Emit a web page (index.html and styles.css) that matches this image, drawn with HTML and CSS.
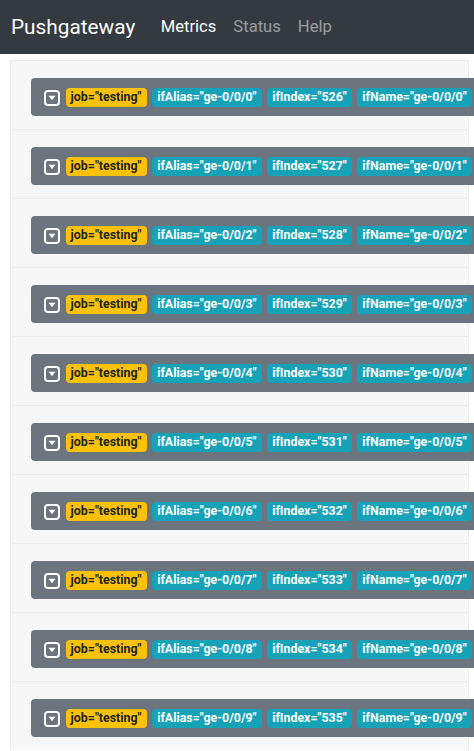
FILE: index.html
```html
<!DOCTYPE html>
<html lang="en">
<head>
<meta charset="utf-8">
<title>Pushgateway</title>
<link rel="stylesheet" href="styles.css">
</head>
<body>
<nav class="navbar">
  <a class="brand" href="#">Pushgateway</a>
  <ul class="nav">
    <li class="nav-item active">Metrics</li>
    <li class="nav-item">Status</li>
    <li class="nav-item">Help</li>
  </ul>
</nav>
<main class="groups">
  <div class="card"><div class="card-header"><div class="group-btn"><svg class="toggle" viewBox="0 0 16 16"><rect x="1" y="1" width="14" height="14" rx="3" ry="3"/><polygon points="4.5,5.8 11.5,5.8 8,10.2"/></svg><span class="badge warn">job="testing"</span><span class="badge info">ifAlias="ge-0/0/0"</span><span class="badge info">ifIndex="526"</span><span class="badge info">ifName="ge-0/0/0"</span></div></div></div>
  <div class="card"><div class="card-header"><div class="group-btn"><svg class="toggle" viewBox="0 0 16 16"><rect x="1" y="1" width="14" height="14" rx="3" ry="3"/><polygon points="4.5,5.8 11.5,5.8 8,10.2"/></svg><span class="badge warn">job="testing"</span><span class="badge info">ifAlias="ge-0/0/1"</span><span class="badge info">ifIndex="527"</span><span class="badge info">ifName="ge-0/0/1"</span></div></div></div>
  <div class="card"><div class="card-header"><div class="group-btn"><svg class="toggle" viewBox="0 0 16 16"><rect x="1" y="1" width="14" height="14" rx="3" ry="3"/><polygon points="4.5,5.8 11.5,5.8 8,10.2"/></svg><span class="badge warn">job="testing"</span><span class="badge info">ifAlias="ge-0/0/2"</span><span class="badge info">ifIndex="528"</span><span class="badge info">ifName="ge-0/0/2"</span></div></div></div>
  <div class="card"><div class="card-header"><div class="group-btn"><svg class="toggle" viewBox="0 0 16 16"><rect x="1" y="1" width="14" height="14" rx="3" ry="3"/><polygon points="4.5,5.8 11.5,5.8 8,10.2"/></svg><span class="badge warn">job="testing"</span><span class="badge info">ifAlias="ge-0/0/3"</span><span class="badge info">ifIndex="529"</span><span class="badge info">ifName="ge-0/0/3"</span></div></div></div>
  <div class="card"><div class="card-header"><div class="group-btn"><svg class="toggle" viewBox="0 0 16 16"><rect x="1" y="1" width="14" height="14" rx="3" ry="3"/><polygon points="4.5,5.8 11.5,5.8 8,10.2"/></svg><span class="badge warn">job="testing"</span><span class="badge info">ifAlias="ge-0/0/4"</span><span class="badge info">ifIndex="530"</span><span class="badge info">ifName="ge-0/0/4"</span></div></div></div>
  <div class="card"><div class="card-header"><div class="group-btn"><svg class="toggle" viewBox="0 0 16 16"><rect x="1" y="1" width="14" height="14" rx="3" ry="3"/><polygon points="4.5,5.8 11.5,5.8 8,10.2"/></svg><span class="badge warn">job="testing"</span><span class="badge info">ifAlias="ge-0/0/5"</span><span class="badge info">ifIndex="531"</span><span class="badge info">ifName="ge-0/0/5"</span></div></div></div>
  <div class="card"><div class="card-header"><div class="group-btn"><svg class="toggle" viewBox="0 0 16 16"><rect x="1" y="1" width="14" height="14" rx="3" ry="3"/><polygon points="4.5,5.8 11.5,5.8 8,10.2"/></svg><span class="badge warn">job="testing"</span><span class="badge info">ifAlias="ge-0/0/6"</span><span class="badge info">ifIndex="532"</span><span class="badge info">ifName="ge-0/0/6"</span></div></div></div>
  <div class="card"><div class="card-header"><div class="group-btn"><svg class="toggle" viewBox="0 0 16 16"><rect x="1" y="1" width="14" height="14" rx="3" ry="3"/><polygon points="4.5,5.8 11.5,5.8 8,10.2"/></svg><span class="badge warn">job="testing"</span><span class="badge info">ifAlias="ge-0/0/7"</span><span class="badge info">ifIndex="533"</span><span class="badge info">ifName="ge-0/0/7"</span></div></div></div>
  <div class="card"><div class="card-header"><div class="group-btn"><svg class="toggle" viewBox="0 0 16 16"><rect x="1" y="1" width="14" height="14" rx="3" ry="3"/><polygon points="4.5,5.8 11.5,5.8 8,10.2"/></svg><span class="badge warn">job="testing"</span><span class="badge info">ifAlias="ge-0/0/8"</span><span class="badge info">ifIndex="534"</span><span class="badge info">ifName="ge-0/0/8"</span></div></div></div>
  <div class="card"><div class="card-header"><div class="group-btn"><svg class="toggle" viewBox="0 0 16 16"><rect x="1" y="1" width="14" height="14" rx="3" ry="3"/><polygon points="4.5,5.8 11.5,5.8 8,10.2"/></svg><span class="badge warn">job="testing"</span><span class="badge info">ifAlias="ge-0/0/9"</span><span class="badge info">ifIndex="535"</span><span class="badge info">ifName="ge-0/0/9"</span></div></div></div>
</main>
</body>
</html>
```

FILE: styles.css
```css
html, body {
  margin: 0;
  padding: 0;
}
body {
  font-family: Roboto, "Liberation Sans", sans-serif;
  color: #212529;
  background: #fff;
  overflow: hidden;
}
.navbar {
  height: 54px;
  background: #343a40;
  display: flex;
  align-items: center;
  padding: 0 11px;
  box-sizing: border-box;
}
.brand {
  color: #fff;
  font-size: 20.8px;
  text-decoration: none;
  margin-right: 17px;
  line-height: 30px;
}
.nav {
  list-style: none;
  margin: 0;
  padding: 0;
  display: flex;
}
.nav-item {
  padding: 8px 8.5px;
  font-size: 16.6px;
  line-height: 24px;
  color: rgba(255, 255, 255, 0.5);
}
.nav-item.active {
  color: #fff;
}
.groups {
  padding: 6px 5px 0 10px;
}
.card {
  border: 1px solid #ececec;
  border-bottom: 0;
  overflow: visible;
}
.card-header {
  background: #f7f7f7;
  padding: 17px 0 13px 20px;
}
.group-btn {
  display: flex;
  align-items: center;
  gap: 5.6px;
  width: max-content;
  height: 38px;
  box-sizing: border-box;
  padding: 1px 12px 0 13px;
  background: #6c757d;
  border-radius: 4px;
  white-space: nowrap;
}
.toggle {
  width: 16px;
  height: 16px;
  flex: none;
}
.toggle rect {
  fill: none;
  stroke: #fff;
  stroke-width: 2;
}
.toggle polygon {
  fill: #fff;
}
.badge {
  display: inline-block;
  font-size: 12.4px;
  font-weight: 700;
  line-height: 1;
  padding: 3px 5px;
  border-radius: 4px;
}
.warn {
  background: #ffc107;
  color: #212529;
}
.info {
  background: #17a2b8;
  color: #fff;
}
```
